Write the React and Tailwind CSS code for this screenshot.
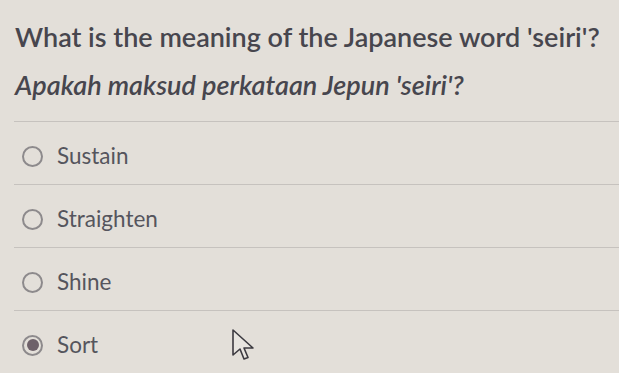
import React from 'react';

const options = [
  { label: 'Sustain', checked: false },
  { label: 'Straighten', checked: false },
  { label: 'Shine', checked: false },
  { label: 'Sort', checked: true },
];

const Radio = ({ checked }) => (
  <span className="w-[21px] h-[21px] rounded-full border-[2px] border-[#8d8a8c] flex items-center justify-center shrink-0">
    {checked && <span className="w-[12px] h-[12px] rounded-full bg-[#6e6169]" />}
  </span>
);

export default function App() {
  return (
    <div
      className="w-[619px] h-[373px] overflow-hidden bg-[#e3dfd9] text-[#404046] relative"
      style={{ fontFamily: 'Lato, "Open Sans", sans-serif' }}
    >
      {/* Question */}
      <div className="pl-[15px] pt-[20px] pb-[19px]">
        <p className="text-[27px] leading-[34px] font-semibold text-[#47464e] whitespace-nowrap">
          What is the meaning of the Japanese word 'seiri'?
        </p>
        <p className="text-[27px] leading-[34px] italic font-semibold text-[#47464e] mt-[14px] whitespace-nowrap">
          Apakah maksud perkataan Jepun 'seiri'?
        </p>
      </div>

      {/* Options */}
      <div className="ml-[14px]">
        {options.map((o) => (
          <div key={o.label} className="border-t border-[#c6c2be]">
            <label className="flex items-center gap-[14px] h-[62px] pt-[6px] pl-[8px]">
              <Radio checked={o.checked} />
              <span className="text-[22.5px] text-[#55555d]">{o.label}</span>
            </label>
          </div>
        ))}
      </div>

      {/* Mouse cursor */}
      <svg
        className="absolute left-[231px] top-[328px]"
        width="28"
        height="34"
        viewBox="0 0 28 34"
      >
        <path
          d="M2 2 L2 27 L9 21 L13 31 L17 29.5 L13 20 L22 20 Z"
          fill="#e8e5e0"
          stroke="#3c3a40"
          strokeWidth="1.6"
          strokeLinejoin="round"
        />
      </svg>
    </div>
  );
}
